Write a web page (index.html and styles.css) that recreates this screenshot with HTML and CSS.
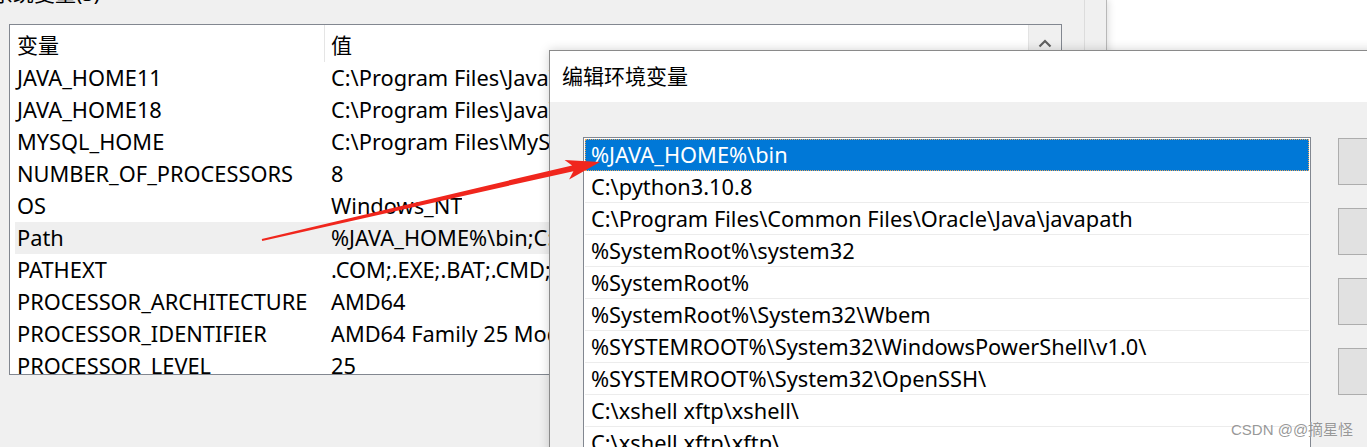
FILE: index.html
```html
<!DOCTYPE html>
<html lang="zh-CN">
<head>
<meta charset="utf-8">
<title>编辑环境变量</title>
<link rel="stylesheet" href="styles.css">
</head>
<body>
<div class="screen">
  <section class="env-window">
    <div class="env-inner">
      <div class="group-label">系统变量(S)</div>
      <div class="var-list">
        <div class="var-table">
          <div class="var-head">
            <span class="col-name">变量</span>
            <span class="col-value">值</span>
          </div>
          <div class="var-rows">
            <div class="var-row"><span class="col-name">JAVA_HOME11</span><span class="col-value">C:\Program Files\Java\jdk-11.0.16</span></div>
            <div class="var-row"><span class="col-name">JAVA_HOME18</span><span class="col-value">C:\Program Files\Java\jdk-18.0.2</span></div>
            <div class="var-row"><span class="col-name">MYSQL_HOME</span><span class="col-value">C:\Program Files\MySQL\MySQL Server 8.0</span></div>
            <div class="var-row"><span class="col-name">NUMBER_OF_PROCESSORS</span><span class="col-value">8</span></div>
            <div class="var-row"><span class="col-name">OS</span><span class="col-value">Windows_NT</span></div>
            <div class="var-row is-current"><span class="col-name">Path</span><span class="col-value">%JAVA_HOME%\bin;C:\python3.10.8;C:\Program Files\Common Files</span></div>
            <div class="var-row"><span class="col-name">PATHEXT</span><span class="col-value">.COM;.EXE;.BAT;.CMD;.VBS;.VBE;.JS;.JSE;.WSF;.WSH;.MSC</span></div>
            <div class="var-row"><span class="col-name">PROCESSOR_ARCHITECTURE</span><span class="col-value">AMD64</span></div>
            <div class="var-row"><span class="col-name">PROCESSOR_IDENTIFIER</span><span class="col-value">AMD64 Family 25 Model 80 Stepping 0, AuthenticAMD</span></div>
            <div class="var-row"><span class="col-name">PROCESSOR_LEVEL</span><span class="col-value">25</span></div>
          </div>
        </div>
        <div class="scrollbar">
          <div class="scroll-up">
            <svg width="14" height="9" viewBox="0 0 14 9"><path d="M1.5 7.5 L7 2 L12.5 7.5" fill="none" stroke="#606060" stroke-width="2.2"/></svg>
          </div>
        </div>
      </div>
    </div>
  </section>

  <section class="edit-dialog">
    <header class="dialog-title">编辑环境变量</header>
    <div class="dialog-body">
      <div class="path-list">
        <div class="path-item selected">%JAVA_HOME%\bin</div>
        <div class="path-item">C:\python3.10.8</div>
        <div class="path-item">C:\Program Files\Common Files\Oracle\Java\javapath</div>
        <div class="path-item">%SystemRoot%\system32</div>
        <div class="path-item">%SystemRoot%</div>
        <div class="path-item">%SystemRoot%\System32\Wbem</div>
        <div class="path-item">%SYSTEMROOT%\System32\WindowsPowerShell\v1.0\</div>
        <div class="path-item">%SYSTEMROOT%\System32\OpenSSH\</div>
        <div class="path-item">C:\xshell xftp\xshell\</div>
        <div class="path-item">C:\xshell xftp\xftp\</div>
      </div>
      <div class="dialog-buttons">
        <button class="dlg-btn" type="button"></button>
        <button class="dlg-btn" type="button"></button>
        <button class="dlg-btn" type="button"></button>
        <button class="dlg-btn" type="button"></button>
      </div>
    </div>
  </section>

  <svg class="annotation-arrow" width="1367" height="447" viewBox="0 0 1367 447">
    <polygon points="261.8,239.1 572.1,165.4 564.6,159.9 600,162 569.1,179.4 573.4,171.2 262.2,241" fill="#f0261d"/>
  </svg>

  <div class="watermark">CSDN @@摘星怪</div>
</div>
</body>
</html>
```

FILE: styles.css
```css
html, body {
  margin: 0;
  padding: 0;
}

body {
  width: 1367px;
  height: 447px;
  overflow: hidden;
  background: #ffffff;
  color: #000000;
  font-family: "Noto Sans", "Noto Sans CJK SC", sans-serif;
  font-size: 21.8px;
}

.screen {
  position: relative;
  width: 1367px;
  height: 447px;
  overflow: hidden;
}

/* ---------- back window: 环境变量 ---------- */
.env-window {
  position: absolute;
  left: 0;
  top: 0;
  width: 1107px;
  height: 447px;
  box-sizing: border-box;
  background: #f0f0f0;
  border-right: 1px solid #b8b8b8;
  box-shadow: 2px 0 7px rgba(0, 0, 0, 0.12);
}

.env-inner {
  display: flex;
  flex-direction: column;
  width: 1085px;
  height: 100%;
  box-sizing: border-box;
  padding-left: 9px;
  border-right: 1px solid #dcdcdc;
}

.group-label {
  height: 21px;
  line-height: 21px;
  font-size: 21px;
  margin-top: -17px;
  margin-left: -17px;
  white-space: nowrap;
}

.var-list {
  display: flex;
  margin-top: 20px;
  width: 1053px;
  height: 351px;
  box-sizing: border-box;
  border: 1px solid #828790;
  background: #ffffff;
}

.var-table {
  flex: 1;
  min-width: 0;
  padding-left: 5px;
  overflow: hidden;
}

.var-head {
  display: flex;
  height: 37px;
}

.var-head span {
  padding-top: 3px;
  line-height: 34px;
  box-sizing: border-box;
  font-size: 21px;
}

.var-head .col-name {
  width: 310px;
  flex: none;
  padding-left: 2px;
  border-right: 1px solid #e5e5e5;
}

.var-head .col-value {
  padding-left: 6px;
}

.var-rows {
  height: 312px;
  overflow: hidden;
}

.var-row {
  display: flex;
  height: 32px;
  line-height: 32px;
  white-space: nowrap;
}

.var-row.is-current {
  background: #efefef;
}

.var-row .col-name {
  width: 309px;
  flex: none;
  padding-left: 2px;
  box-sizing: border-box;
}

.var-row .col-value {
  padding-left: 7px;
  overflow: hidden;
}

.scrollbar {
  width: 32px;
  flex: none;
  background: #f0f0f0;
  border-left: 1px solid #e3e3e3;
}

.scroll-up {
  height: 36px;
  display: flex;
  align-items: center;
  justify-content: center;
}

/* ---------- front dialog: 编辑环境变量 ---------- */
.edit-dialog {
  position: absolute;
  left: 549px;
  top: 50px;
  width: 840px;
  height: 420px;
  background: #f0f0f0;
  border: 1px solid #8a8a8a;
  box-shadow: 0 0 10px rgba(0, 0, 0, 0.18);
}

.dialog-title {
  height: 51px;
  line-height: 51px;
  padding-left: 12px;
  background: #ffffff;
  font-size: 21px;
}

.dialog-body {
  display: flex;
  gap: 27px;
  padding: 35px 0 0 33px;
}

.path-list {
  width: 728px;
  height: 340px;
  flex: none;
  box-sizing: border-box;
  padding: 1px 0 0 1px;
  border: 1px solid #828790;
  background: #ffffff;
  overflow: hidden;
}

.path-item {
  height: 32px;
  width: 724px;
  box-sizing: border-box;
  border-bottom: 1px solid #ececec;
  line-height: 31px;
  padding-left: 6px;
  white-space: nowrap;
}

.path-item.selected {
  background: #0078d7;
  color: #ffffff;
  border-bottom-color: #0078d7;
  outline: 1px dotted #e7a55c;
  outline-offset: -1px;
}

.dialog-buttons {
  display: flex;
  flex-direction: column;
  gap: 23px;
  padding-top: 1px;
}

.dlg-btn {
  width: 110px;
  height: 47px;
  box-sizing: border-box;
  margin: 0;
  padding: 0;
  background: #e1e1e1;
  border: 1px solid #adadad;
}

/* ---------- overlays ---------- */
.annotation-arrow {
  position: absolute;
  left: 0;
  top: 0;
  pointer-events: none;
}

.watermark {
  position: absolute;
  left: 1231px;
  top: 420px;
  line-height: 20px;
  font-family: "Liberation Sans", "Noto Sans CJK SC", sans-serif;
  font-size: 15px;
  color: rgba(125, 125, 125, 0.8);
  text-shadow: 0 0 1px rgba(255, 255, 255, 0.9);
  white-space: nowrap;
}
```
